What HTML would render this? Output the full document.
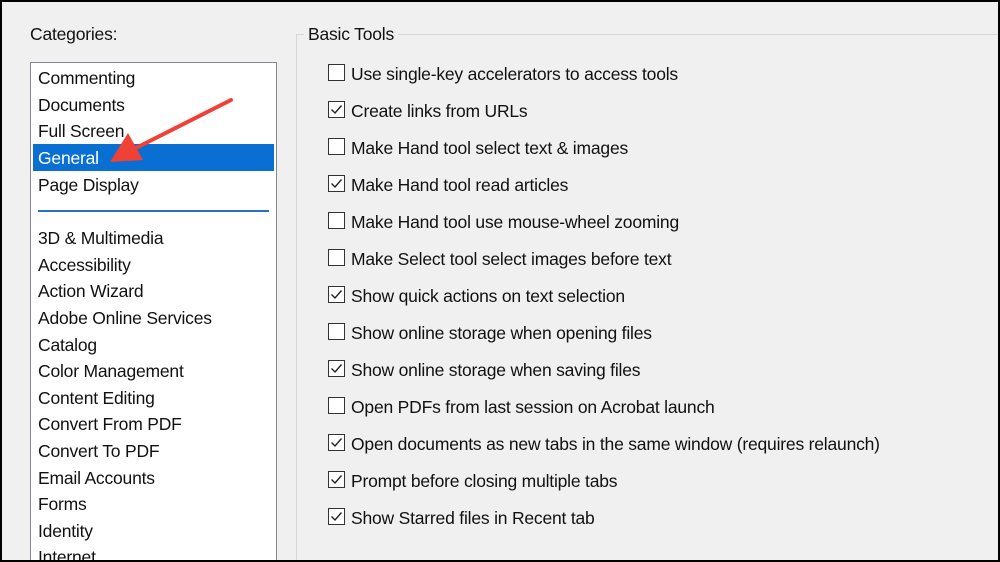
<!DOCTYPE html>
<html><head><style>
*{margin:0;padding:0;box-sizing:border-box}
html,body{width:1000px;height:562px;overflow:hidden}
body{background:#000;font-family:"Liberation Sans",sans-serif;color:#111;position:relative}
#f{position:absolute;left:2px;top:2px;width:996px;height:558px;background:#f0f0f0;overflow:hidden}
.t{position:absolute;font-size:17.5px;white-space:nowrap;line-height:20px;letter-spacing:-0.2px}
#lb{position:absolute;left:28px;top:60px;width:247px;height:498px;background:#fff;border:1px solid #828790;border-bottom:none}
#hl{position:absolute;left:31px;top:142px;width:241px;height:27px;background:#0a6fd2}
#sep{position:absolute;left:36px;top:208px;width:231px;height:2px;background:#2b6fc0}
#gb{position:absolute;left:294px;top:32px;width:702px;height:526px;border:1px solid #d6d6d6;border-right:none;border-bottom:none}
.cb{position:absolute;left:326px;width:17px;height:17px;border:1px solid #333;background:#fff}
.cb svg{position:absolute;left:1px;top:1px}
</style></head><body><div id="f">
<div class="t" style="left:28px;top:22px">Categories:</div>
<div id="gb"></div>
<div class="t" style="left:302px;top:22px;background:#f0f0f0;padding:0 4px">Basic Tools</div>
<div id="lb"></div>
<div id="hl"></div>
<div id="sep"></div>
<div class="t" style="left:36px;top:66px">Commenting</div>
<div class="t" style="left:36px;top:93px">Documents</div>
<div class="t" style="left:36px;top:119px">Full Screen</div>
<div class="t" style="left:36px;top:146px;color:#fff">General</div>
<div class="t" style="left:36px;top:173px">Page Display</div>
<div class="t" style="left:36px;top:226px">3D &amp; Multimedia</div>
<div class="t" style="left:36px;top:253px">Accessibility</div>
<div class="t" style="left:36px;top:279px">Action Wizard</div>
<div class="t" style="left:36px;top:306px">Adobe Online Services</div>
<div class="t" style="left:36px;top:333px">Catalog</div>
<div class="t" style="left:36px;top:359px">Color Management</div>
<div class="t" style="left:36px;top:386px">Content Editing</div>
<div class="t" style="left:36px;top:412px">Convert From PDF</div>
<div class="t" style="left:36px;top:439px">Convert To PDF</div>
<div class="t" style="left:36px;top:466px">Email Accounts</div>
<div class="t" style="left:36px;top:492px">Forms</div>
<div class="t" style="left:36px;top:519px">Identity</div>
<div class="t" style="left:36px;top:545px;height:13px;overflow:hidden">Internet</div>
<svg style="position:absolute;left:0;top:0" width="996" height="558">
<line x1="229" y1="98" x2="130" y2="148" stroke="#ef4136" stroke-width="4" stroke-linecap="round"/>
<polygon points="108,160 126,131 141,158" fill="#ef4136"/>
</svg>
<div id="rows"></div>
<script>
var r=[["Use single-key accelerators to access tools",0],["Create links from URLs",1],["Make Hand tool select text & images",0],["Make Hand tool read articles",1],["Make Hand tool use mouse-wheel zooming",0],["Make Select tool select images before text",0],["Show quick actions on text selection",1],["Show online storage when opening files",0],["Show online storage when saving files",1],["Open PDFs from last session on Acrobat launch",0],["Open documents as new tabs in the same window (requires relaunch)",1],["Prompt before closing multiple tabs",1],["Show Starred files in Recent tab",1]];
var h="";r.forEach(function(x,i){var c=71+37*i;
h+='<div class="cb" style="top:'+(c-9)+'px">'+(x[1]?'<svg width="13" height="13"><path d="M1.5 6.5 L5 10 L11.5 2.5" fill="none" stroke="#222" stroke-width="1.4"/></svg>':'')+'</div>';
h+='<div class="t" style="left:349px;top:'+(c-9)+'px">'+x[0].replace("&","&amp;")+'</div>';});
document.getElementById("rows").innerHTML=h;
</script>
</div></body></html>
